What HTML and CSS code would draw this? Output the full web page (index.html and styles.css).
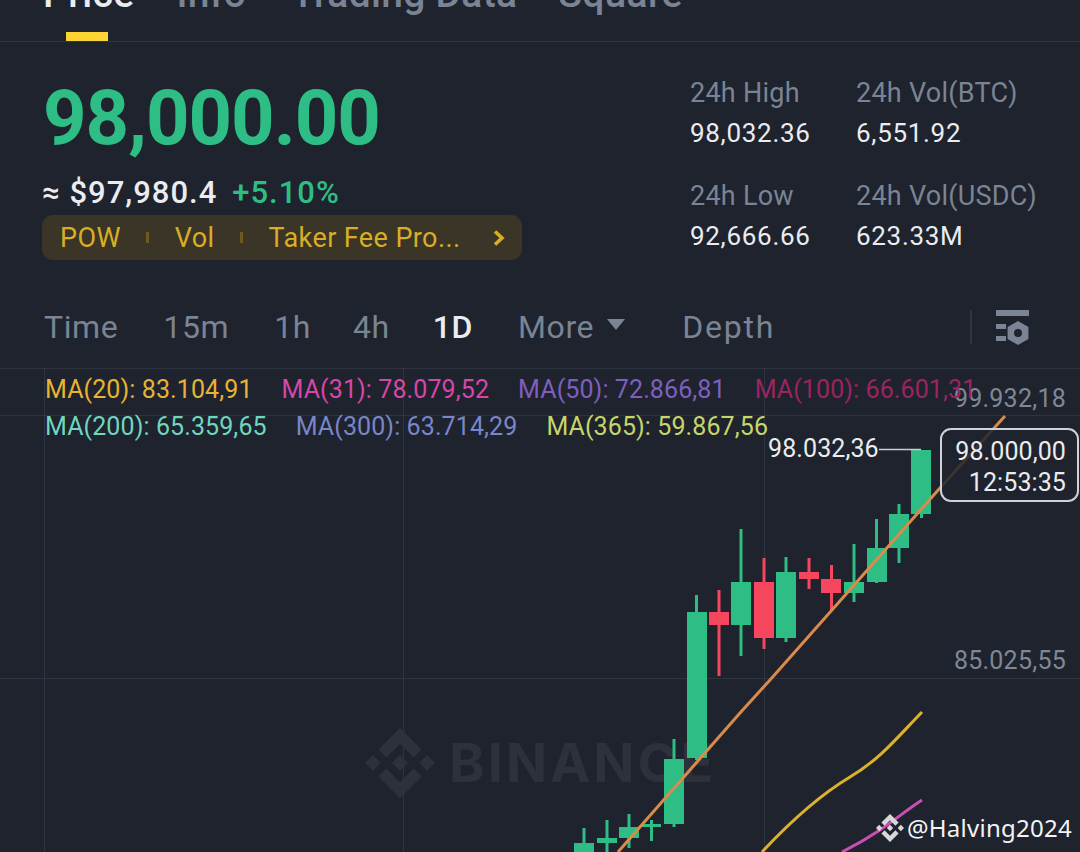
FILE: index.html
```html
<!DOCTYPE html>
<html lang="en">
<head>
    <meta charset="UTF-8">
    <meta name="viewport" content="width=device-width, initial-scale=1.0">
    <title>BTC/USDC</title>
    <link rel="stylesheet" href="styles.css">
</head>
<body>
    <svg class="defs" width="0" height="0">
        <symbol id="bnbLogo" viewBox="0 0 126.61 126.61">
            <path d="M38.73 53.2l24.59-24.58 24.6 24.6 14.3-14.31L63.32 0 24.43 38.9l14.3 14.3zM0 63.31l14.3-14.31 14.31 14.31-14.31 14.3zM38.73 73.41l24.59 24.59 24.6-24.6 14.31 14.29-38.9 38.91-38.91-38.88-.02-.02zM98 63.31l14.3-14.31 14.31 14.3-14.31 14.32zM77.83 63.3L63.32 48.78 52.59 59.51l-1.24 1.23-2.54 2.54 14.51 14.5 14.51-14.47z"/>
        </symbol>
    </svg>

    <nav class="tabs">
        <div class="tab active">Price</div>
        <div class="tab">Info</div>
        <div class="tab">Trading Data</div>
        <div class="tab">Square</div>
    </nav>

    <section class="summary">
        <div class="summary-left">
            <div class="last-price">98,000.00</div>
            <div class="sub-price">
                <span class="fiat">≈ $97,980.4</span>
                <span class="change">+5.10%</span>
            </div>
            <div class="tags">
                <span class="tag">POW</span>
                <i class="tag-sep"></i>
                <span class="tag">Vol</span>
                <i class="tag-sep"></i>
                <span class="tag">Taker Fee Pro...</span>
                <svg class="tag-arrow" width="14" height="18" viewBox="0 0 14 18"><path d="M3 2.5 L10 9 L3 15.5" fill="none" stroke="#d9ad25" stroke-width="3.6"/></svg>
            </div>
        </div>
        <div class="stats">
            <div class="stat"><div class="stat-label">24h High</div><div class="stat-value">98,032.36</div></div>
            <div class="stat"><div class="stat-label">24h Vol(BTC)</div><div class="stat-value">6,551.92</div></div>
            <div class="stat"><div class="stat-label">24h Low</div><div class="stat-value">92,666.66</div></div>
            <div class="stat"><div class="stat-label">24h Vol(USDC)</div><div class="stat-value">623.33M</div></div>
        </div>
    </section>

    <div class="timebar">
        <span class="time-item">Time</span>
        <span class="time-item">15m</span>
        <span class="time-item">1h</span>
        <span class="time-item four-hour">4h</span>
        <span class="time-item selected">1D</span>
        <span class="time-item more">More<i class="caret"></i></span>
        <span class="time-item depth">Depth</span>
        <i class="time-divider"></i>
        <svg class="settings" width="34" height="34" viewBox="0 0 34 34">
            <path fill="#7a8494" d="M0 0h33v6H0zM0 14h10v5H0zM0 26h10v5H0z"/>
            <path fill="#7a8494" fill-rule="evenodd" d="M22 11l10.4 6v12L22 35l-10.400-6V17zM22 19a4 4 0 1 0 0 8 4 4 0 0 0 0-8z"/>
        </svg>
    </div>

    <div class="chart">
        <svg class="chart-svg" width="1080" height="484" viewBox="0 368 1080 484">
            <g class="grid">
                <path d="M0 368.500H1080M0 415.500H1080M0 678.500H1080M44.500 368V852M403.500 368V852M764.500 368V852"/>
            </g>

            <g class="watermark">
                <use href="#bnbLogo" x="365" y="728" width="70" height="70"/>
                <text x="449" y="782">BINANCE</text>
            </g>

            <g class="up">
                <rect x="582.500" y="828" width="3" height="24"/><rect x="574" y="843" width="20" height="9"/>
                <rect x="605.500" y="820" width="3" height="32"/><rect x="597" y="838" width="20" height="5"/>
                <rect x="627.500" y="814" width="3" height="34"/><rect x="619" y="827" width="20" height="11"/>
                <rect x="650" y="820" width="3" height="21"/><rect x="641" y="824" width="20" height="3"/>
                <rect x="672.500" y="739" width="3" height="88"/><rect x="664" y="759" width="20" height="65"/>
                <rect x="695" y="595" width="3" height="165"/><rect x="687" y="612" width="20" height="146"/>
                <rect x="739.500" y="529" width="3" height="127"/><rect x="731" y="582" width="20" height="43"/>
                <rect x="784.500" y="557" width="3" height="85"/><rect x="776" y="572" width="20" height="66"/>
                <rect x="852.500" y="544" width="3" height="58"/><rect x="844" y="582" width="20" height="11"/>
                <rect x="875" y="519" width="3" height="64"/><rect x="867" y="548" width="20" height="34"/>
                <rect x="897.500" y="504" width="3" height="59"/><rect x="889" y="514" width="20" height="34"/>
                <rect x="920" y="450" width="3" height="68"/><rect x="911" y="450" width="20" height="64"/>
            </g>
            <g class="down">
                <rect x="717.500" y="590" width="3" height="86"/><rect x="709" y="612" width="20" height="13"/>
                <rect x="762.500" y="558" width="3" height="91"/><rect x="754" y="582" width="20" height="56"/>
                <rect x="807.500" y="558" width="3" height="31"/><rect x="799" y="572" width="20" height="7"/>
                <rect x="830" y="565" width="3" height="45"/><rect x="821" y="579" width="20" height="14"/>
            </g>

            <path class="ma ma-orange" d="M618 852L740 713L770 680L940 488L1005 416"/>
            <path class="ma ma-yellow" d="M762 852C790 822 820 795 850 777S895 740 922 712"/>
            <path class="ma ma-pink" d="M842 852C856 845 868 838 880 830S908 809 922 800"/>

            <text class="axis-label" x="1066" y="407">99.932,18</text>
            <text class="axis-label" x="1066" y="669">85.025,55</text>
            <text class="high-label" x="768" y="457">98.032,36</text>
            <path class="high-line" d="M879 449.500H921"/>
        </svg>

        <div class="legend">
            <div class="legend-row">
                <span class="ma20">MA(20): 83.104,91</span>
                <span class="ma31">MA(31): 78.079,52</span>
                <span class="ma50">MA(50): 72.866,81</span>
                <span class="ma100">MA(100): 66.601,31</span>
            </div>
            <div class="legend-row">
                <span class="ma200">MA(200): 65.359,65</span>
                <span class="ma300">MA(300): 63.714,29</span>
                <span class="ma365">MA(365): 59.867,56</span>
            </div>
        </div>

        <div class="price-box">
            <div>98.000,00</div>
            <div>12:53:35</div>
        </div>

        <div class="credit">
            <svg class="credit-logo" width="28" height="28"><use href="#bnbLogo" width="28" height="28"/></svg>
            <span>@Halving2024</span>
        </div>
    </div>
</body>
</html>
```

FILE: styles.css
```css
html, body {
    margin: 0;
    padding: 0;
}
body {
    width: 1080px;
    height: 852px;
    overflow: hidden;
    background: #1e232e;
    color: #eaecef;
    font-family: Roboto, "Liberation Sans", sans-serif;
}
.defs {
    position: absolute;
}

/* top tabs, cut off by the top of the screen */
.tabs {
    display: flex;
    align-items: flex-start;
    height: 41px;
    overflow: hidden;
    padding-left: 43px;
    gap: 42px;
    border-bottom: 1px solid #2e3440;
}
.tab {
    position: relative;
    height: 57px;
    margin-top: -16px;
    font-size: 39px;
    font-weight: 500;
    letter-spacing: 0.3px;
    line-height: 20px;
    color: #7a8494;
    white-space: nowrap;
}
.tab:nth-child(3) {
    margin-left: 3px;
}
.tab:nth-child(4) {
    margin-left: -1px;
}
.tab.active {
    color: #eaecef;
}
.tab.active::after {
    content: "";
    position: absolute;
    left: 23px;
    width: 42px;
    bottom: 0;
    height: 9px;
    background: #fcd535;
}

.summary {
    display: flex;
    height: 248px;
    padding-left: 42px;
}
.summary-left {
    width: 648px;
}
.last-price {
    margin-top: 36px;
    padding-left: 1px;
    height: 80px;
    font-size: 76px;
    font-weight: 700;
    letter-spacing: -1px;
    line-height: 80px;
    color: #2ebd85;
}
.sub-price {
    display: flex;
    gap: 15px;
    margin-top: 15px;
    height: 40px;
    font-size: 31px;
    font-weight: 500;
    letter-spacing: 1px;
    line-height: 40px;
    white-space: nowrap;
}
.change {
    color: #2ebd85;
}
.tags {
    display: flex;
    align-items: center;
    box-sizing: border-box;
    width: 480px;
    height: 45px;
    margin-top: 2px;
    padding: 0 16px 0 18px;
    border-radius: 11px;
    background: #3a3526;
    font-size: 27px;
    letter-spacing: 0.4px;
    color: #d9ad25;
}
.tag-sep {
    width: 3px;
    height: 11px;
    margin: 0 25.5px;
    background: #6d5a20;
}
.tag-arrow {
    margin-left: auto;
}

.stats {
    display: grid;
    grid-template-columns: 166px auto;
    grid-auto-rows: 103px;
    padding-top: 33px;
}
.stat-label {
    font-size: 27px;
    letter-spacing: 0.25px;
    line-height: 36px;
    color: #7a8494;
    white-space: nowrap;
}
.stat-value {
    margin-top: 4px;
    font-size: 26px;
    letter-spacing: 0.7px;
    line-height: 36px;
    color: #eaecef;
    white-space: nowrap;
}

.timebar {
    display: flex;
    align-items: center;
    height: 74px;
    padding-bottom: 4px;
    padding-left: 44px;
    gap: 45px;
    font-size: 32px;
    letter-spacing: 0.6px;
    color: #7a8494;
}
.time-item {
    white-space: nowrap;
    line-height: 40px;
}
.four-hour {
    margin-left: -3px;
}
.time-item.selected {
    margin-left: -2px;
    color: #eaecef;
    font-weight: 500;
}
.more {
    display: flex;
    align-items: center;
}
.caret {
    width: 0;
    height: 0;
    margin: 0 0 6px 13px;
    border-left: 9px solid transparent;
    border-right: 9px solid transparent;
    border-top: 11px solid #7a8494;
}
.depth {
    margin-left: 12px;
    letter-spacing: 1.8px;
}
.time-divider {
    width: 2px;
    height: 34px;
    margin-left: auto;
    margin-right: -21px;
    background: #2e3440;
}
.settings {
    margin-right: 50px;
    overflow: visible;
}

.chart {
    position: relative;
    height: 484px;
}
.chart-svg {
    display: block;
}
.grid path {
    fill: none;
    stroke: #2e3440;
    stroke-width: 1;
}
.watermark {
    fill: #2c313c;
}
.watermark text {
    font-family: Inter, sans-serif;
    font-size: 54px;
    font-weight: 700;
    letter-spacing: 3px;
}
.up rect {
    fill: #2ebd85;
}
.down rect {
    fill: #f6465d;
}
.ma {
    fill: none;
    stroke-width: 3;
}
.ma-orange {
    stroke: #d98b4c;
}
.ma-yellow {
    stroke: #dcb12e;
}
.ma-pink {
    stroke: #c94fb0;
}
.axis-label {
    font-size: 25px;
    letter-spacing: 0.25px;
    fill: #7f8894;
    text-anchor: end;
}
.high-label {
    font-size: 25px;
    letter-spacing: 0.1px;
    fill: #eaecef;
}
.high-line {
    fill: none;
    stroke: #c9ced6;
    stroke-width: 1.5;
}

.legend {
    position: absolute;
    left: 45px;
    top: 3px;
    font-size: 25px;
    letter-spacing: 0.1px;
    line-height: 37px;
}
.legend-row {
    display: flex;
    gap: 29px;
    white-space: nowrap;
}
.ma20 { color: #e8b430; }
.ma31 { color: #d946a8; }
.ma50 { color: #7e5fc0; }
.ma100 { color: #9c2460; }
.ma200 { color: #6fd6bf; }
.ma300 { color: #7986c9; }
.ma365 { color: #c6d66a; }

.price-box {
    position: absolute;
    left: 940px;
    top: 60px;
    box-sizing: border-box;
    width: 139px;
    height: 74px;
    padding: 6px 11px 0 0;
    border: 2px solid #cfd3d8;
    border-radius: 11px;
    background: rgba(30, 35, 46, 0.85);
    font-size: 25px;
    letter-spacing: 0.1px;
    line-height: 31px;
    text-align: right;
}

.credit {
    position: absolute;
    left: 876px;
    top: 443px;
    display: flex;
    align-items: center;
    gap: 3px;
    font-family: "Noto Sans", sans-serif;
    font-size: 24px;
    letter-spacing: 0.25px;
    color: #f2f3f5;
}
.credit-logo {
    fill: #d8d8d8;
}
```
